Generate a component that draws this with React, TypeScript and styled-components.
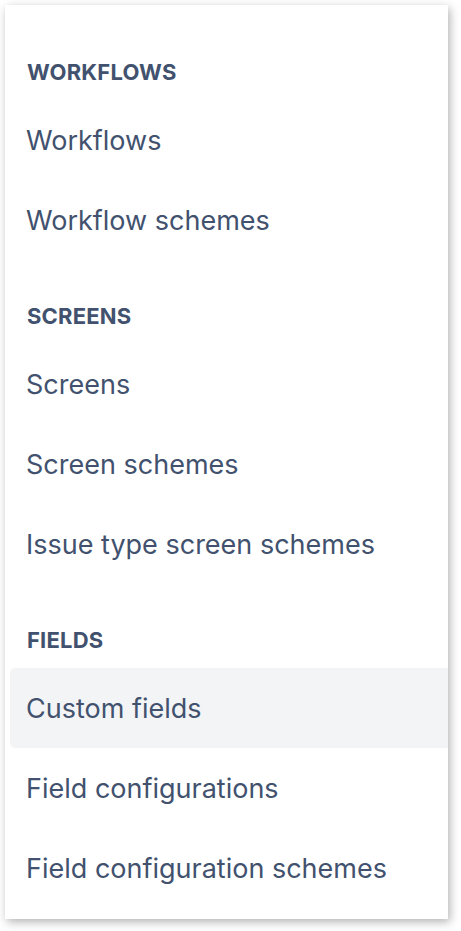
import React from 'react'
import styled, {createGlobalStyle} from "styled-components"

const GlobalStyle = createGlobalStyle`
    body {
        margin: 0;
        background: #ffffff;
        font-family: Inter, "Noto Sans", sans-serif;
    }
`

type Section = { title: string, items: string[] }

const sections: Section[] = [
    { title: "WORKFLOWS", items: ["Workflows", "Workflow schemes"] },
    { title: "SCREENS", items: ["Screens", "Screen schemes", "Issue type screen schemes"] },
    { title: "FIELDS", items: ["Custom fields", "Field configurations", "Field configuration schemes"] },
]

const selected = "Custom fields"

function App() {
    return (
        <Page>
            <GlobalStyle />
            <Card>
                {sections.map(section => (
                    <Group key={section.title}>
                        <Heading>{section.title}</Heading>
                        {section.items.map(item => (
                            <Item key={item} active={item === selected}>{item}</Item>
                        ))}
                    </Group>
                ))}
            </Card>
        </Page>
    )
}

export default App

const Page = styled.div`
    padding: 5px 13px 12px 5px;
`

const Card = styled.nav`
    background: #fff;
    box-shadow: 2px 3px 9px rgba(0, 0, 0, 0.3);
    padding: 11px 0 11px 5px;
    display: flex;
    flex-direction: column;
`

const Group = styled.div`
    display: flex;
    flex-direction: column;
`

const Heading = styled.div`
    height: 84px;
    box-sizing: border-box;
    padding: 44px 0 16px 17px;
    line-height: 24px;
    font-size: 22px;
    font-weight: 700;
    color: #42526e;
    letter-spacing: 0.2px;
`

const Item = styled.div<{active?: boolean}>`
    height: 80px;
    display: flex;
    align-items: center;
    padding-left: 16px;
    font-size: 27px;
    color: #42526e;
    border-radius: 5px 0 0 5px;
    background: ${p => p.active ? "#f3f4f6" : "transparent"};
`
